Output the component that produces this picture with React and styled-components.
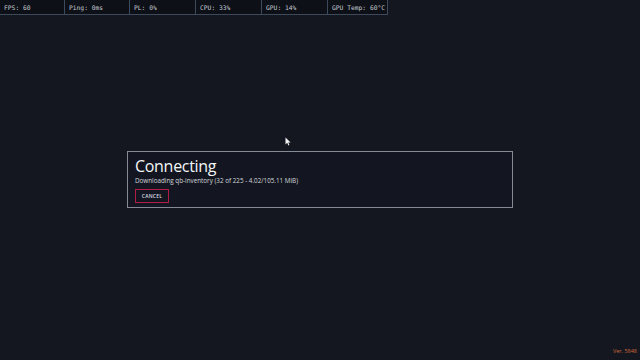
import styled, { createGlobalStyle } from "styled-components";

const GlobalStyle = createGlobalStyle`
  html, body {
    margin: 0;
    padding: 0;
    background: #141720;
  }
  #root {
    width: 640px;
    height: 360px;
  }
`;

const STATS = [
  { label: "FPS", value: "60", width: 65 },
  { label: "Ping", value: "0ms", width: 65 },
  { label: "PL", value: "0%", width: 66 },
  { label: "CPU", value: "33%", width: 66 },
  { label: "GPU", value: "14%", width: 66 },
  { label: "GPU Temp", value: "60°C", width: 60 },
];

function App() {
  return (
    <>
      <GlobalStyle />
      <S.Screen>
        <S.StatBar>
          {STATS.map((s) => (
            <S.Stat key={s.label} $width={s.width}>
              {s.label}: {s.value}
            </S.Stat>
          ))}
        </S.StatBar>
        <S.Center>
          <S.Cursor width="6" height="9" viewBox="0 0 6 9">
            <path d="M0.5 0.5 L0.5 7.5 L2.2 5.8 L3.4 8.4 L4.4 8 L3.3 5.4 L5.6 5.4 Z" fill="#f2f2f2" />
          </S.Cursor>
          <S.Dialog>
            <S.Title>Connecting</S.Title>
            <S.Status>Downloading qb-inventory (32 of 225 - 4.02/105.11 MiB)</S.Status>
            <S.CancelButton>CANCEL</S.CancelButton>
          </S.Dialog>
        </S.Center>
        <S.Version>Ver. 5848</S.Version>
      </S.Screen>
    </>
  );
}

const S = {
  Screen: styled.div`
    position: relative;
    width: 640px;
    height: 360px;
    background: #141720;
    overflow: hidden;
    display: flex;
    flex-direction: column;
  `,
  StatBar: styled.div`
    display: flex;
    align-self: flex-start;
    height: 14px;
    background: #0d1017;
    border-bottom: 1px solid #3c4a5c;
  `,
  Stat: styled.div`
    width: ${(p) => p.$width}px;
    flex-shrink: 0;
    box-sizing: border-box;
    display: flex;
    align-items: center;
    padding-left: 4px;
    border-right: 1px solid #3c4a5c;
    font-family: "DejaVu Sans Mono", "Liberation Mono", monospace;
    font-size: 6.3px;
    color: #c4c8d0;
    white-space: nowrap;
  `,
  Center: styled.div`
    position: relative;
    flex: 1;
    padding: 136px 0 0 127px;
  `,
  Cursor: styled.svg`
    position: absolute;
    left: 285px;
    top: 122px;
  `,
  Dialog: styled.div`
    box-sizing: border-box;
    width: 386px;
    height: 57px;
    padding: 4px 6px 0 7px;
    border: 1px solid #858b96;
    background: #131620;
    display: flex;
    flex-direction: column;
    align-items: flex-start;
  `,
  Title: styled.div`
    font-family: "Open Sans", "Noto Sans", sans-serif;
    font-weight: 500;
    font-size: 16px;
    line-height: 20px;
    color: #f4f5f7;
    letter-spacing: -0.3px;
  `,
  Status: styled.div`
    font-family: "Open Sans", "Noto Sans", sans-serif;
    font-size: 6.3px;
    line-height: 9px;
    color: #d4d7dc;
  `,
  CancelButton: styled.button`
    flex-shrink: 0;
    box-sizing: border-box;
    margin-top: 4px;
    width: 34px;
    height: 14px;
    padding: 0;
    border: 1px solid #b01e48;
    background: transparent;
    font-family: "Open Sans", "Noto Sans", sans-serif;
    font-weight: 600;
    font-size: 5px;
    letter-spacing: 0.2px;
    color: #d8dbe0;
  `,
  Version: styled.div`
    position: absolute;
    right: 3px;
    bottom: 5px;
    font-family: "Open Sans", "Noto Sans", sans-serif;
    font-size: 5.5px;
    color: #d0683a;
  `,
};

export default App;
